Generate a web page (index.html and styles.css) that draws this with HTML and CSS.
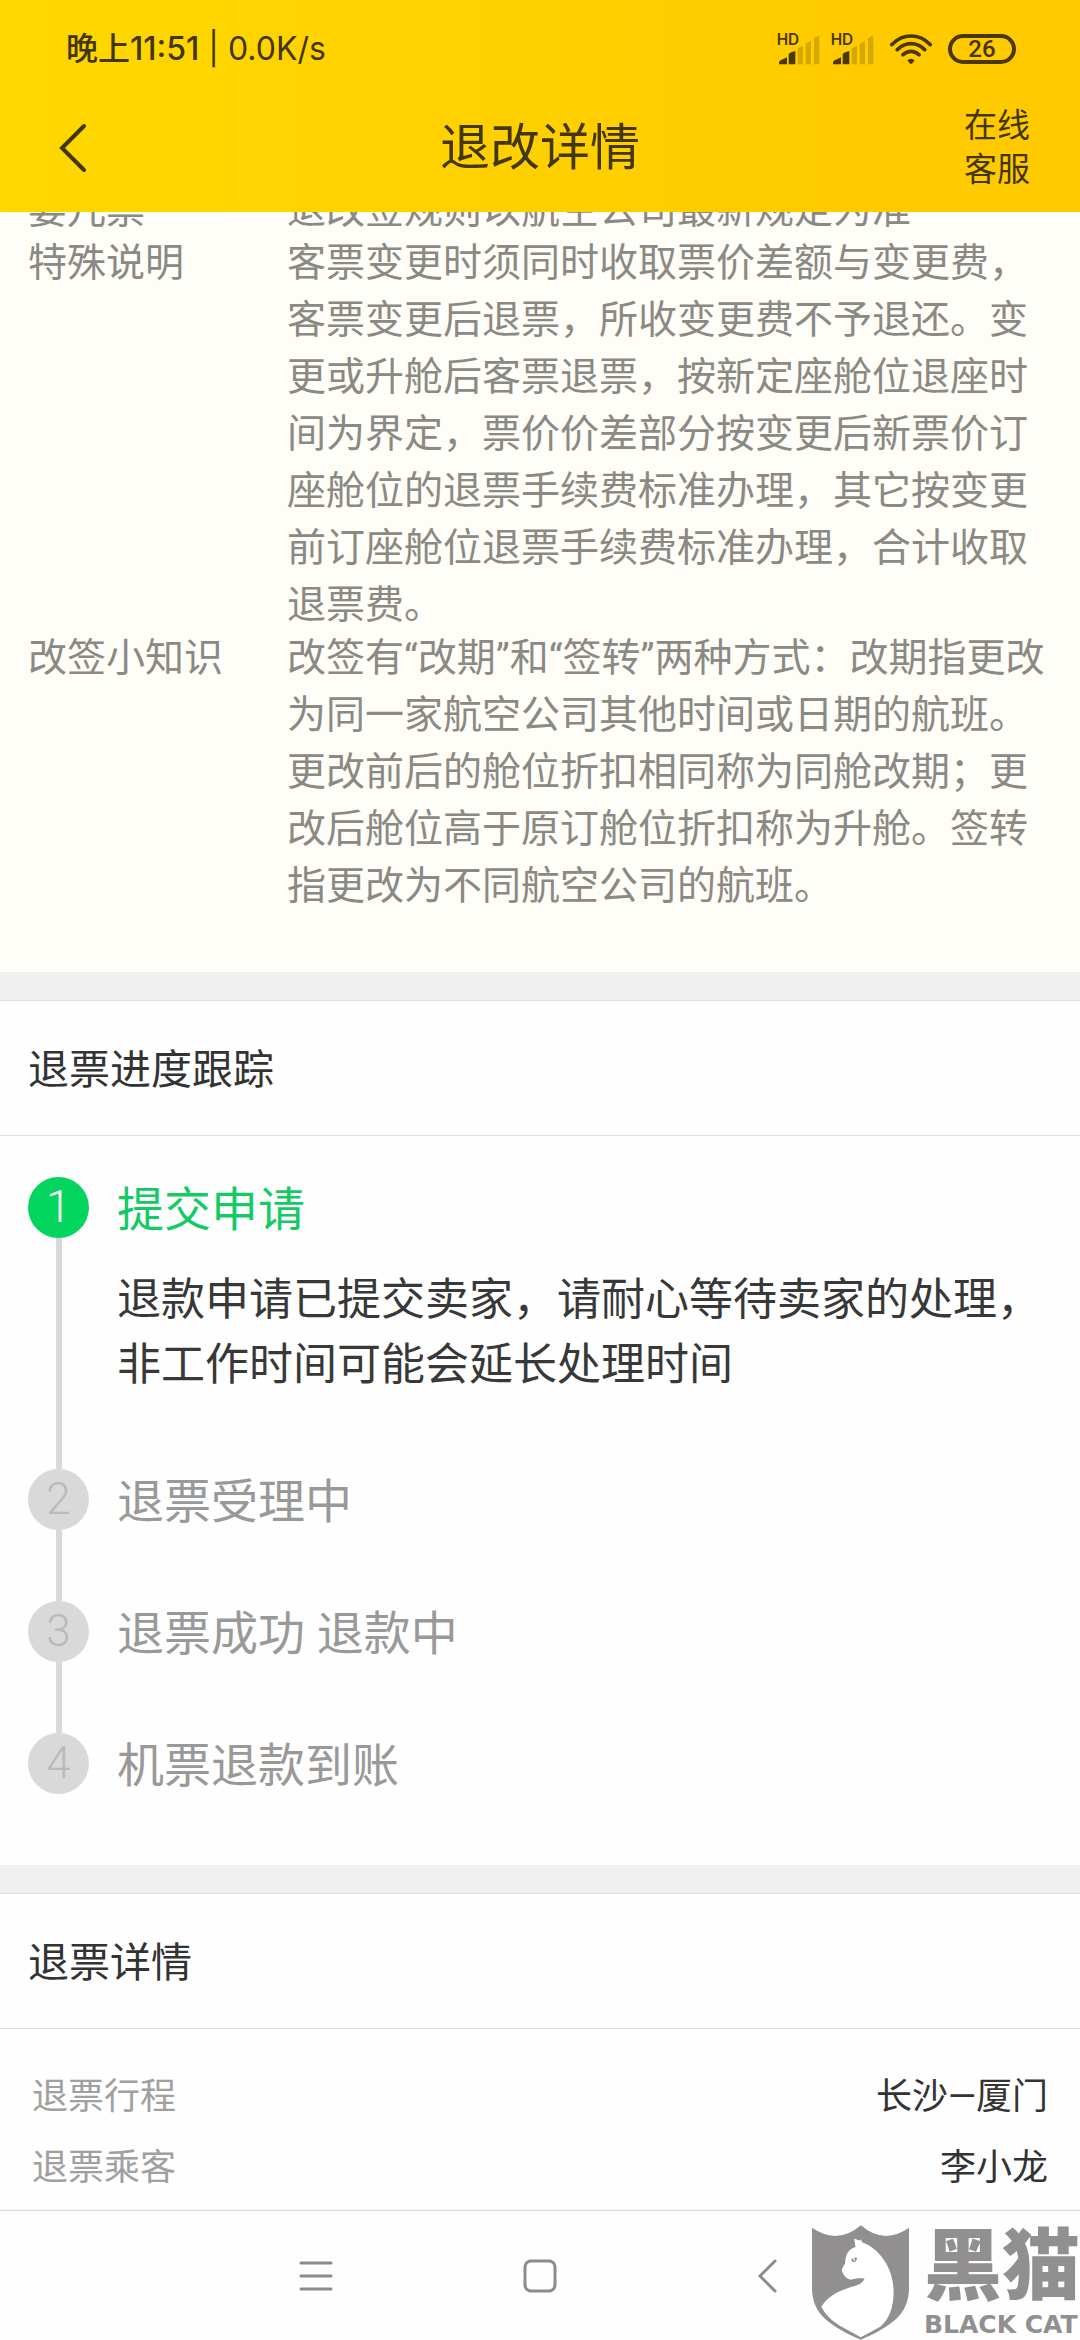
FILE: index.html
```html
<!DOCTYPE html>
<html lang="zh-CN">
<head>
  <meta charset="UTF-8">
  <meta name="viewport" content="width=device-width, initial-scale=1">
  <title>退改详情</title>
  <link rel="stylesheet" href="styles.css">
</head>
<body>
  <header class="header">
    <div class="status-bar">
      <p class="status-time"><b>晚上11:51</b> | 0.0K/s</p>
      <div class="status-icons">
        <svg class="signal" viewBox="0 0 126 93">
          <text x="-4" y="34">HD</text>
          <path d="M3 91v-5q0-5 5-7l19-9v21zM32 91V61q3-6 20-10v40z"/>
          <path class="off" d="M59 91V43l16-8v56zM83 91V29l16-9v71zM108 91V13l16-9v87z"/>
        </svg>
        <svg class="signal" viewBox="0 0 126 93">
          <text x="-4" y="34">HD</text>
          <path d="M3 91v-5q0-5 5-7l19-9v21zM32 91V61q3-6 20-10v40z"/>
          <path class="off" d="M59 91V43l16-8v56zM83 91V29l16-9v71zM108 91V13l16-9v87z"/>
        </svg>
        <svg class="wifi" viewBox="0 0 126 90">
          <path d="M5 32Q30 6 63 6t58 26M22 47Q40 29 63 29t41 18M39 62Q50 52 63 52t24 10"/>
          <path class="dot" d="M52 79q11-9 22 0l-7 9q-4 3-8 0z"/>
        </svg>
        <span class="battery">26</span>
      </div>
    </div>
    <div class="title-bar">
      <button class="btn-back" type="button" aria-label="返回">
        <svg viewBox="0 0 30 50"><path d="M26 3L4 25l22 22"/></svg>
      </button>
      <h1>退改详情</h1>
      <a class="service" href="#">在线<br>客服</a>
    </div>
  </header>

  <main class="content">
    <dl class="rules">
      <dt>婴儿票</dt>
      <dd>退改签规则以航空公司最新规定为准</dd>
      <dt>特殊说明</dt>
      <dd>客票变更时须同时收取票价差额与变更费，客票变更后退票，所收变更费不予退还。变更或升舱后客票退票，按新定座舱位退座时间为界定，票价价差部分按变更后新票价订座舱位的退票手续费标准办理，其它按变更前订座舱位退票手续费标准办理，合计收取退票费。</dd>
      <dt>改签小知识</dt>
      <dd>改签有“改期”和“签转”两种方式：改期指更改为同一家航空公司其他时间或日期的航班。更改前后的舱位折扣相同称为同舱改期；更改后舱位高于原订舱位折扣称为升舱。签转指更改为不同航空公司的航班。</dd>
    </dl>

    <section class="card">
      <h2>退票进度跟踪</h2>
      <ol class="steps">
        <li class="active">
          <div class="marker"><span>1</span></div>
          <div class="step-text">
            <h3>提交申请</h3>
            <p>退款申请已提交卖家，请耐心等待卖家的处理，非工作时间可能会延长处理时间</p>
          </div>
        </li>
        <li>
          <div class="marker"><span>2</span></div>
          <div class="step-text"><h3>退票受理中</h3></div>
        </li>
        <li>
          <div class="marker"><span>3</span></div>
          <div class="step-text"><h3>退票成功 退款中</h3></div>
        </li>
        <li>
          <div class="marker"><span>4</span></div>
          <div class="step-text"><h3>机票退款到账</h3></div>
        </li>
      </ol>
    </section>

    <section class="card">
      <h2>退票详情</h2>
      <dl class="detail">
        <div><dt>退票行程</dt><dd>长沙—厦门</dd></div>
        <div><dt>退票乘客</dt><dd>李小龙</dd></div>
      </dl>
    </section>
  </main>

  <nav class="nav-bar">
    <button type="button" aria-label="菜单">
      <svg viewBox="0 0 34 34"><path d="M2 4h30M2 17h30M2 30h30"/></svg>
    </button>
    <button type="button" aria-label="主页">
      <svg viewBox="0 0 34 34"><rect x="2" y="2" width="30" height="30" rx="6"/></svg>
    </button>
    <button type="button" aria-label="返回">
      <svg viewBox="0 0 34 34"><path d="M28 2L13 17l15 15"/></svg>
    </button>
  </nav>

  <!-- 黑猫水印 -->
  <div class="watermark">
    <svg viewBox="0 0 290 343">
      <path fill="#918f90" d="M0 8Q76 60 146 0q70 60 144 8v180c0 80-55 115-144 155C57 303 0 268 0 188z"/>
      <path fill="#fff" d="M126 40l15 6 5-3 4 8c58 22 95 85 94 150 0 45-14 82-40 103l-58 31-64-35c-26-17-44-35-54-56 24-38 60-50 98-62 18-5 27-12 31-22-14-3-29 0-42 3-12-3-20-11-24-22-5-9 4-19 8-27 1-26 9-42 31-49z"/>
      <path fill="#918f90" d="M117 103q8-8 17-6 2 10-9 14-7-1-8-8z"/>
      <path fill="#fff" d="M123 99l5 0-1 9-3-2z"/>
    </svg>
    <div class="watermark-text">
      <strong>黑猫</strong>
      <span>BLACK CAT</span>
    </div>
  </div>
</body>
</html>
```

FILE: styles.css
```css
* {
  margin: 0;
  padding: 0;
  box-sizing: border-box;
}
body {
  display: flex;
  flex-direction: column;
  min-height: 100vh;
  position: relative;
  background-color: #fefefe;
  color: #333;
  font-family: Roboto, "Noto Sans CJK SC", sans-serif;
}
h1, h2, h3 {
  font-weight: 400;
}
ol {
  list-style: none;
}
button {
  border: none;
  background: none;
}
svg {
  display: block;
}

/* 顶部 */
.header {
  position: relative;
  background: linear-gradient(to right, #ffd800, #ffcb00 80%);
  color: #43360a;
}
.status-bar {
  display: flex;
  justify-content: space-between;
  align-items: center;
  height: 80px;
  padding: 18px 64px 0 66px;
}
.status-time {
  font-size: 32px;
  font-family: Inter, "Noto Sans CJK SC", sans-serif;
  line-height: 40px;
}
.status-time b {
  font-weight: 500;
}
.status-icons {
  display: flex;
  align-items: center;
  gap: 12px;
}
.signal {
  width: 42px;
  height: 31px;
  fill: #4b3800;
  overflow: visible;
}
.signal text {
  font: 600 46px Inter, sans-serif;
}
.signal .off {
  fill: #d3a900;
}
.wifi {
  width: 42px;
  height: 30px;
  margin: 0 4px;
  fill: none;
  stroke: #4b3800;
  stroke-width: 11;
  stroke-linecap: round;
}
.wifi .dot {
  fill: #4b3800;
  stroke: none;
}
.battery {
  width: 68px;
  height: 30px;
  border: 4px solid #4b3800;
  border-radius: 15px;
  font: 500 24px/22px Roboto, sans-serif;
  text-align: center;
}
.title-bar {
  display: grid;
  grid-template-columns: 1fr auto 1fr;
  align-items: center;
  height: 132px;
  padding: 3px 50px 0;
}
.title-bar h1 {
  font-size: 50px;
  line-height: 72px;
}
.btn-back {
  justify-self: start;
  padding: 0 8px;
}
.btn-back svg {
  width: 30px;
  height: 50px;
  fill: none;
  stroke: #43360a;
  stroke-width: 4;
  stroke-linecap: round;
}
.service {
  justify-self: end;
  color: inherit;
  font-size: 33px;
  line-height: 44px;
  text-decoration: none;
}

/* 退改规则 */
.content {
  flex: 1;
  overflow: hidden;
  background-color: #f0f0f0;
}
.rules {
  display: grid;
  grid-template-columns: 259px 1fr;
  margin-top: -30px; /* 页面已滚动，首行被标题栏遮住 */
  padding: 0 26px 61px 28px;
  background-color: #fffdf7;
  color: #8a8983;
  font-size: 39px;
  line-height: 57px;
}
.rules dt,
.rules dd {
  margin-bottom: -4px;
}

/* 卡片 */
.card {
  margin-top: 28px;
  border-top: 1px solid #e0e0e0;
  background-color: #fefefe;
}
.card h2 {
  padding: 38px 28px 34px;
  border-bottom: 1px solid #dedede;
  font-size: 41px;
  line-height: 62px;
}

/* 进度 */
.steps {
  padding: 41px 28px 0;
}
.steps li {
  display: flex;
  gap: 28px;
  color: #999;
}
.marker {
  display: flex;
  flex-direction: column;
  align-items: center;
  width: 61px;
}
.marker span {
  width: 61px;
  height: 61px;
  border-radius: 50%;
  background-color: #d9d9d9;
  color: #bababa;
  font-size: 44px;
  font-weight: 300;
  line-height: 61px;
  text-align: center;
}
.marker::after {
  content: '';
  flex: 1;
  width: 6px;
  background-color: #d9d9d9;
}
.steps li:last-child .marker::after {
  display: none;
}
.step-text {
  flex: 1;
  padding-bottom: 67px;
}
.step-text h3 {
  font-size: 47px;
  line-height: 65px;
}
.step-text p {
  padding: 26px 0 4px;
  color: #383838;
  font-size: 44px;
  line-height: 65px;
}
.steps .active h3 {
  color: #14ca65;
}
.steps .active span {
  background-color: #04d55f;
  color: #fff;
}

/* 退票详情 */
.detail {
  padding: 33px 32px 5px;
  font-size: 36px;
  line-height: 71px;
}
.detail div {
  display: flex;
  justify-content: space-between;
}
.detail dt {
  color: #a0a0a0;
}

/* 底部导航 */
.nav-bar {
  display: flex;
  justify-content: center;
  height: 130px;
  border-top: 1px solid #dedede;
}
.nav-bar button {
  display: flex;
  justify-content: center;
  align-items: center;
  width: 224px;
}
.nav-bar svg {
  width: 34px;
  height: 34px;
  fill: none;
  stroke: #8c8c8c;
  stroke-width: 3;
  stroke-linecap: round;
}

/* 水印 */
.watermark {
  position: absolute;
  right: 0;
  bottom: 0;
  display: flex;
  gap: 15px;
  color: #918f90;
}
.watermark svg {
  width: 97px;
  height: 115px;
}
.watermark-text {
  display: flex;
  flex-direction: column;
}
.watermark-text strong {
  font-size: 78px;
  font-weight: 900;
  line-height: 86px;
}
.watermark-text span {
  font: 700 25px/28px "DejaVu Sans", sans-serif;
  white-space: nowrap;
}
```
